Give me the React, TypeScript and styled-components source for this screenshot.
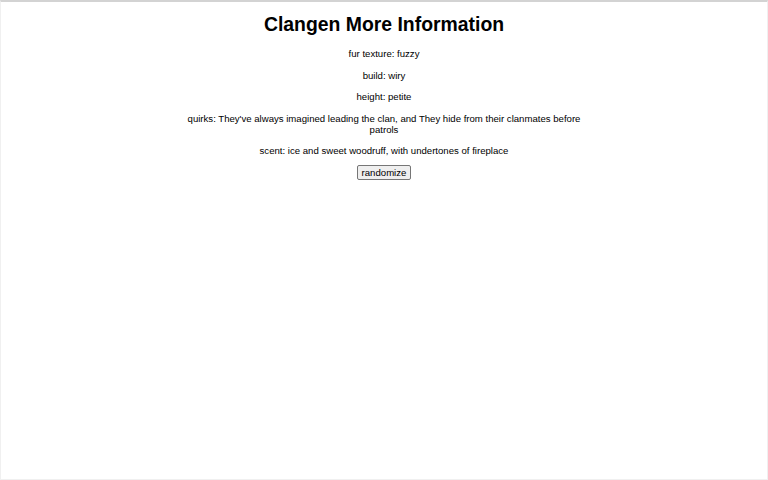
import { FC } from 'react';
import styled, { createGlobalStyle } from 'styled-components';

const GlobalStyle = createGlobalStyle`
  html, body {
    margin: 0;
    padding: 0;
    background: #ffffff;
  }
  body {
    font-family: "Liberation Sans", Arial, sans-serif;
    color: #000;
  }
`;

const Frame = styled.div`
  box-sizing: border-box;
  height: 480px;
  border-top: 2px solid #d3d3d3;
  border-left: 1px solid #f0f0f0;
  border-right: 1px solid #f0f0f0;
  border-bottom: 1px solid #f0f0f0;
  display: flex;
  flex-direction: column;
  align-items: center;
`;

const Title = styled.h1`
  font-size: 19.4px;
  font-weight: bold;
  margin: 11px 0 0;
  line-height: 22px;
`;

const Info = styled.div`
  width: 400px;
  text-align: center;
  margin-top: 13px;
`;

const Line = styled.p`
  font-size: 9.6px;
  line-height: 11px;
  margin: 0 0 10.5px;

  &:last-of-type {
    margin-bottom: 9px;
  }
`;

const RandomButton = styled.button`
  display: block;
  margin: 0 auto;
  font-family: "Liberation Sans", Arial, sans-serif;
  font-size: 9.6px;
  line-height: 11px;
  padding: 1px 4px;
  border: 1px solid #767676;
  border-radius: 2px;
  background: #efefef;
  color: #000;
`;

const traits = [
  'fur texture: fuzzy',
  'build: wiry',
  'height: petite',
  "quirks: They've always imagined leading the clan, and They hide from their clanmates before patrols",
  'scent: ice and sweet woodruff, with undertones of fireplace',
];

const App: FC = () => {
  return (
    <>
      <GlobalStyle />
      <Frame>
        <Title>Clangen More Information</Title>
        <Info>
          {traits.map((t, i) => (
            <Line key={i}>{t}</Line>
          ))}
          <RandomButton>randomize</RandomButton>
        </Info>
      </Frame>
    </>
  );
};

export default App;
